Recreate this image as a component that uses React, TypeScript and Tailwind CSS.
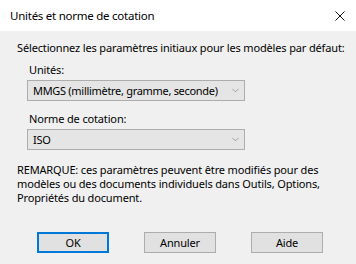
import { ChevronDown } from 'lucide-react';

const font = { fontFamily: '"Noto Sans", "Open Sans", sans-serif' };

const Combo = ({ value }: { value: string }) => (
  <div className="ml-[27px] flex h-[21px] w-[218px] items-center justify-between border border-[#adadad] bg-[#e5e5e5] pl-[5px] pr-[3px]">
    <span className="whitespace-nowrap tracking-[-0.3px]">{value}</span>
    <ChevronDown className="h-[11px] w-[11px] text-[#666]" strokeWidth={1.2} />
  </div>
);

const DialogButton = ({ label, primary }: { label: string; primary?: boolean }) => (
  <button
    className={
      primary
        ? 'h-[21px] w-[72px] border-2 border-[#0078d7] bg-[#e1e1e1] text-black'
        : 'h-[21px] w-[72px] border border-[#adadad] bg-[#e1e1e1] text-black'
    }
  >
    {label}
  </button>
);

export default function App() {
  return (
    <div className="flex h-[264px] w-[356px] flex-col bg-[#f0f0f0] text-[11px] leading-[14px] tracking-[-0.15px] text-black" style={font}>
      <div className="flex h-[31px] items-center justify-between bg-white pl-[10px] pr-[10px] text-[11.5px] tracking-[-0.25px]">
        <span>Unités et norme de cotation</span>
        <svg width="10" height="10" viewBox="0 0 10 10" className="mr-[1px]">
          <path d="M0.5 0.5 L9.5 9.5 M9.5 0.5 L0.5 9.5" stroke="#111" strokeWidth="1" />
        </svg>
      </div>

      <div className="flex flex-col pl-[17px] pt-[10px]">
        <p className="whitespace-nowrap">Sélectionnez les paramètres initiaux pour les modèles par défaut:</p>
        <p className="ml-[12px] mt-[8px]">Unités:</p>
        <div className="-ml-[17px] mt-[3px]">
          <Combo value="MMGS (millimètre, gramme, seconde)" />
        </div>
        <p className="ml-[12px] mt-[11px]">Norme de cotation:</p>
        <div className="-ml-[17px] mt-[3px]">
          <Combo value="ISO" />
        </div>
        <p className="mt-[13px] whitespace-nowrap">
          REMARQUE: ces paramètres peuvent être modifiés pour des
          <br />
          modèles ou des documents individuels dans Outils, Options,
          <br />
          Propriétés du document.
        </p>
      </div>

      <div className="mt-auto mb-[11px] flex gap-[35px] pl-[37px]">
        <DialogButton label="OK" primary />
        <DialogButton label="Annuler" />
        <DialogButton label="Aide" />
      </div>
    </div>
  );
}
